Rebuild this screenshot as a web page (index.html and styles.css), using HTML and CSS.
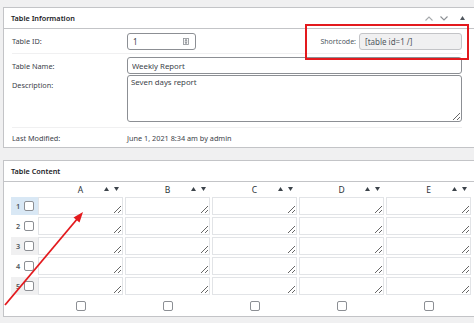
FILE: index.html
```html
<!DOCTYPE html>
<html lang="en">
<head>
    <meta charset="UTF-8">
    <meta name="viewport" content="width=device-width, initial-scale=1.0">
    <title>Edit Table</title>
    <link rel="stylesheet" href="styles.css">
</head>
<body>
    <div class="page">
        <!-- Table Information -->
        <div class="panel">
            <div class="panel-head">
                <h2>Table Information</h2>
                <div class="head-tools">
                    <svg width="8" height="5" viewBox="0 0 8 5"><path d="M0.5 4.5 L4 1 L7.5 4.5" fill="none" stroke="#a7aaad" stroke-width="1.1"/></svg>
                    <svg width="8" height="5" viewBox="0 0 8 5"><path d="M0.5 0.5 L4 4 L7.5 0.5" fill="none" stroke="#8c8f94" stroke-width="1.1"/></svg>
                    <svg class="tri" width="5" height="4" viewBox="0 0 5 4"><path d="M0 4 L2.5 0 L5 4 Z" fill="#50575e"/></svg>
                </div>
            </div>
            <div class="info-body">
                <div class="info-row sep">
                    <label class="info-label" for="table-id">Table ID:</label>
                    <div class="id-input">
                        <span>1</span>
                        <svg width="6" height="7" viewBox="0 0 6 7"><rect x="0.5" y="0.5" width="5" height="6" fill="none" stroke="#8c8f94" stroke-width="0.8"/><path d="M1.8 2.6 L3 1.5 L4.2 2.6 M1.8 4.4 L3 5.5 L4.2 4.4 M3 1.8 V5.2" fill="none" stroke="#50575e" stroke-width="0.7"/></svg>
                    </div>
                    <div class="shortcode">
                        <span class="info-label-sm">Shortcode:</span>
                        <div class="shortcode-box">[table id=1 /]</div>
                    </div>
                </div>
                <div class="info-row">
                    <label class="info-label" for="table-name">Table Name:</label>
                    <input class="text-input" type="text" id="table-name" value="Weekly Report">
                </div>
                <div class="info-row desc sep">
                    <label class="info-label" for="table-desc">Description:</label>
                    <textarea class="desc-input" id="table-desc">Seven days report</textarea>
                </div>
                <div class="info-row last">
                    <span class="info-label">Last Modified:</span>
                    <span class="modified">June 1, 2021 8:34 am by admin</span>
                </div>
            </div>
        </div>

        <!-- Table Content -->
        <div class="panel panel-content">
            <div class="panel-head">
                <h2>Table Content</h2>
            </div>
            <div class="grid" id="grid"></div>
        </div>

        <div class="callout"></div>
        <svg class="pointer" width="100" height="110" viewBox="0 0 100 110">
            <line x1="5" y1="104" x2="78" y2="17" stroke="#e3191d" stroke-width="1.8"/>
            <path d="M83 11 L73.5 16.5 L79.5 21.5 Z" fill="#e3191d"/>
        </svg>
    </div>

    <script>
        // Build the editable table grid
        const grid = document.getElementById('grid');
        const cols = ['A', 'B', 'C', 'D', 'E'];
        const arrows = '<span class="sort"><svg width="5" height="4" viewBox="0 0 5 4"><path d="M0 4 L2.5 0 L5 4 Z"/></svg><svg width="5" height="4" viewBox="0 0 5 4"><path d="M0 0 L2.5 4 L5 0 Z"/></svg></span>';

        let html = '<div></div>';
        cols.forEach(c => {
            html += '<div class="col-head"><span></span><span>' + c + '</span>' + arrows + '</div>';
        });
        for (let r = 1; r <= 5; r++) {
            html += '<div class="row-head row-' + r + '"><span>' + r + '</span><input type="checkbox"></div>';
            cols.forEach(() => { html += '<textarea class="cell"></textarea>'; });
        }
        html += '<div></div>';
        cols.forEach(() => { html += '<div class="col-foot"><input type="checkbox"></div>'; });
        grid.innerHTML = html;
    </script>
</body>
</html>
```

FILE: styles.css
```css
/* Page */
body {
    margin: 0;
    background: #f0f0f1;
    font-family: 'Noto Sans', 'Open Sans', sans-serif;
    color: #3c434a;
    font-size: 7.3px;
    overflow: hidden;
}

.page {
    position: relative;
    padding: 7px 0 0 3px;
    height: 316px;
}

/* Panels */
.panel {
    background: white;
    border: 1px solid #c3c4c7;
    margin-right: -4px;
}

.panel-head {
    height: 20px;
    border-bottom: 1px solid #c3c4c7;
    display: flex;
    align-items: center;
    padding: 0 7px;
}

.panel-head h2 {
    margin: 0;
    font-size: 7.3px;
    font-weight: 600;
    color: #1d2327;
}

.head-tools {
    margin-left: auto;
    margin-right: 5px;
    display: flex;
    align-items: center;
    gap: 7px;
}

.head-tools .tri {
    margin-left: 5px;
}

/* Table information */
.info-body {
    padding: 0 15px 0 8px;
}

.info-row {
    display: flex;
    align-items: center;
}

.info-row.sep {
    border-bottom: 1px solid #f0f0f1;
}

.info-row:first-child {
    height: 24px;
}

.info-row:nth-child(2) {
    padding-top: 3px;
}

.info-row.desc {
    align-items: flex-start;
    padding: 1px 0 5px;
}

.info-row.desc .info-label {
    padding-top: 5px;
}

.info-row.last {
    height: 19px;
}

.info-label {
    width: 115px;
    flex-shrink: 0;
    color: #3c434a;
}

.id-input {
    width: 69px;
    height: 17px;
    box-sizing: border-box;
    border: 1px solid #8c8f94;
    border-radius: 3px;
    display: flex;
    align-items: center;
    justify-content: space-between;
    padding: 0 6px 0 5px;
    font-size: 8px;
    color: #3c434a;
}

.shortcode {
    margin-left: auto;
    display: flex;
    align-items: center;
    gap: 3px;
}

.info-label-sm {
    font-size: 7px;
    color: #50575e;
}

.shortcode-box {
    width: 103px;
    height: 17px;
    box-sizing: border-box;
    background: #f0f0f1;
    border: 1px solid #c3c4c7;
    border-radius: 3px;
    padding: 0 5px;
    display: flex;
    align-items: center;
    font-size: 8px;
    color: #50575e;
}

.text-input,
.desc-input {
    flex: 1;
    box-sizing: border-box;
    border: 1px solid #8c8f94;
    border-radius: 3px;
    font-family: inherit;
    font-size: 7.8px;
    color: #3c434a;
    margin: 0;
}

.text-input {
    height: 17px;
    padding: 0 4px;
}

.desc-input {
    height: 47px;
    padding: 1px 3px;
    resize: vertical;
}

.modified {
    color: #3c434a;
}

/* Table content */
.panel-content {
    margin-top: 12px;
}

.grid {
    display: grid;
    grid-template-columns: 25px repeat(5, 85px);
    grid-template-rows: 12px repeat(5, 18px) 14px;
    column-gap: 2px;
    row-gap: 2px;
    padding: 1px 0 5px 7px;
}

.col-head {
    display: grid;
    grid-template-columns: 1fr auto 1fr;
    align-items: center;
    font-size: 8.5px;
    color: #2c3338;
}

.sort {
    justify-self: end;
    display: flex;
    gap: 5px;
    padding-right: 4px;
}

.sort svg {
    fill: #3c434a;
}

.row-head {
    display: flex;
    align-items: center;
    padding-left: 5px;
    margin-right: -2px;
    gap: 4px;
    font-weight: 600;
    color: #50575e;
}

.row-1 {
    background: #d9e8f5;
}

.row-3,
.row-5 {
    background: #f0f0f1;
}

input[type="checkbox"] {
    appearance: none;
    width: 10px;
    height: 10px;
    margin: 0;
    border: 1px solid #8c8f94;
    border-radius: 2px;
    background: white;
    box-sizing: border-box;
}

.cell {
    box-sizing: border-box;
    width: 85px;
    height: 18px;
    margin: 0;
    padding: 0;
    border: 1px solid #e2e4e7;
    border-radius: 0;
    background: white;
    resize: both;
}

.col-foot {
    display: flex;
    justify-content: center;
    align-items: flex-end;
}

/* Red annotations over the screenshot */
.callout {
    position: absolute;
    left: 305px;
    top: 24px;
    width: 160px;
    height: 32px;
    border: 2px solid #e3191d;
}

.pointer {
    position: absolute;
    left: 0;
    top: 201px;
}
```
